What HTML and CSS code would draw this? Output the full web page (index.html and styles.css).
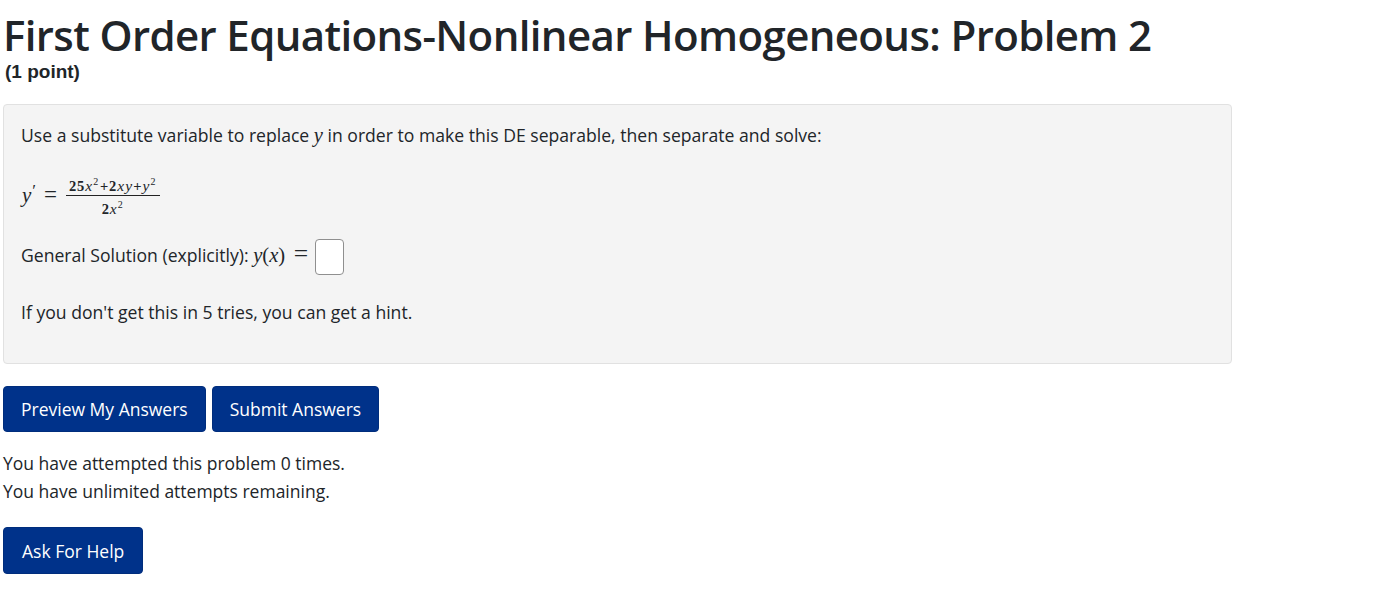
FILE: index.html
```html
<!DOCTYPE html>
<html lang="en">
<head>
<meta charset="utf-8">
<title>First Order Equations-Nonlinear Homogeneous: Problem 2</title>
<link rel="stylesheet" href="styles.css">
</head>
<body>
<div class="page">
  <h1 class="title">First Order Equations-Nonlinear Homogeneous: Problem 2</h1>
  <div class="points">(1 point)</div>

  <div class="problem">
    <p class="line">Use a substitute variable to replace <span class="mv">y</span> in order to make this DE separable, then separate and solve:</p>
    <div class="eq">
      <span class="mv big">y</span><span class="prime">′</span>
      <span class="equals">=</span>
      <span class="frac">
        <span class="num">25<span class="mv">x</span><sup>2</sup>+2<span class="mv">xy</span>+<span class="mv">y</span><sup>2</sup></span>
        <span class="den">2<span class="mv">x</span><sup>2</sup></span>
      </span>
    </div>
    <p class="line gen">General Solution (explicitly): <span class="mv">y</span><span class="mr">(</span><span class="mv">x</span><span class="mr">)</span> <span class="mr eqs">=</span><input class="answer" type="text" aria-label="answer"></p>
    <p class="line last">If you don't get this in 5 tries, you can get a hint.</p>
  </div>

  <div class="actions">
    <button class="btn">Preview My Answers</button>
    <button class="btn">Submit Answers</button>
  </div>

  <div class="attempts">
    <div>You have attempted this problem 0 times.</div>
    <div>You have unlimited attempts remaining.</div>
  </div>

  <button class="btn help">Ask For Help</button>
</div>
</body>
</html>
```

FILE: styles.css
```css
html, body {
  margin: 0;
  padding: 0;
  background: #ffffff;
}

body {
  font-family: "Open Sans", "Noto Sans", sans-serif;
  color: #212529;
}

.page {
  padding: 0 3px;
  width: 1229px;
}

.title {
  margin: 6px 0 0 0;
  font-size: 42px;
  line-height: 57px;
  font-weight: 600;
  letter-spacing: -0.62px;
  color: #212529;
}

.points {
  font-family: "Liberation Sans", Arial, sans-serif;
  font-weight: bold;
  font-size: 19px;
  line-height: 18px;
  margin-left: 2px;
}

.problem {
  margin-top: 23px;
  background: #f4f4f4;
  border: 1px solid #e1e1e1;
  border-radius: 4px;
  padding: 16px 17px 21px 17px;
  font-size: 17.6px;
}

.line {
  margin: 0 0 16px 0;
  line-height: 28px;
}

.mv {
  font-family: "Liberation Serif", "Times New Roman", serif;
  font-style: italic;
  font-size: 1.17em;
}

.mr {
  font-family: "Liberation Serif", "Times New Roman", serif;
  font-size: 1.17em;
}

.eqs {
  font-size: 1.45em;
  margin: 0 7px 0 4px;
  line-height: 1;
}

.eq {
  height: 60px;
  margin-bottom: 16px;
  display: flex;
  align-items: center;
  font-family: "Liberation Serif", "Times New Roman", serif;
}

.eq .big {
  font-size: 21px;
  margin-left: 1px;
}

.prime {
  font-size: 17px;
  margin-top: -8px;
  margin-left: 1px;
}

.equals {
  font-size: 23px;
  margin: 0 9px 0 8px;
}

.frac {
  display: inline-flex;
  flex-direction: column;
  align-items: center;
  font-size: 14.5px;
  font-weight: bold;
}

.frac .mv {
  font-size: 15.5px;
  font-weight: normal;
  letter-spacing: 1.2px;
}

.frac sup {
  font-size: 10px;
  font-weight: normal;
  vertical-align: 6px;
  margin-right: 1px;
}

.num {
  padding: 0 3px 1px 3px;
  border-bottom: 1px solid #222;
  line-height: 16px;
  letter-spacing: 0.8px;
}

.den {
  line-height: 16px;
  padding-top: 1px;
  letter-spacing: 0.8px;
}

.gen {
  margin-bottom: 27px;
}

.answer {
  width: 29px;
  height: 36px;
  box-sizing: border-box;
  margin: -4px 0;
  vertical-align: middle;
  border: 1px solid #8f8f8f;
  border-radius: 4px;
  background: #fff;
  padding: 0;
}

.last {
  margin-bottom: 16px;
}

.actions {
  margin-top: 22px;
  display: flex;
  gap: 6px;
}

.btn {
  font-family: "Open Sans", "Noto Sans", sans-serif;
  font-size: 17.5px;
  color: #ffffff;
  background: #00328a;
  border: 1px solid #002d7c;
  border-radius: 4px;
  height: 46px;
  padding: 0 17px;
  cursor: pointer;
}

.attempts {
  margin-top: 17px;
  font-size: 17.5px;
  line-height: 28px;
}

.help {
  margin-top: 22px;
  height: 47px;
  padding: 0 18px;
}
```
